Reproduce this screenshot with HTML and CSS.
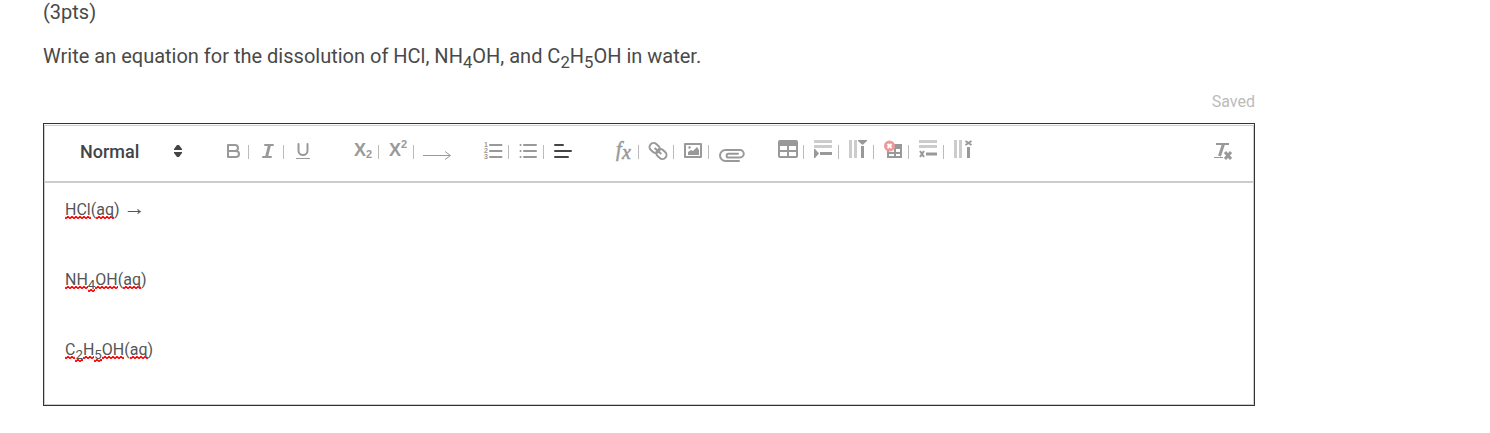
FILE: index.html
```
<!DOCTYPE html>
<html lang="en">
<head>
    <meta charset="UTF-8">
    <meta name="viewport" content="width=device-width, initial-scale=1.0">
    <title>Question</title>
    <link rel="stylesheet" href="styles.css">
</head>
<body>
    <main class="question">
        <p class="points">(3pts)</p>
        <p class="prompt">Write an equation for the dissolution of HCl, NH<sub>4</sub>OH, and C<sub>2</sub>H<sub>5</sub>OH in water.</p>
        <div class="status">Saved</div>

        <div class="editor">
            <div class="toolbar" role="toolbar" aria-label="Formatting">
                <div class="format">
                    <select aria-label="Text style">
                        <option>Normal</option>
                        <option>Heading</option>
                    </select>
                    <svg class="carets" viewBox="0 0 8 12"><path d="M0 5V4L3 0h2l3 4v1zM0 7h8v1l-3 4H3L0 8z"/></svg>
                </div>

                <div class="group">
                    <button type="button" aria-label="Bold"><svg viewBox="0 0 34 32"><path class="line" d="M14 10h7a3 3 0 0 1 0 6h-7zM14 16h8a3 3 0 0 1 0 6h-8z"/></svg></button>
                    <button type="button" aria-label="Italic"><svg viewBox="0 0 34 32"><path class="line" d="M16 10h8M14 22h8"/><path class="heavy" d="M20.500 10l-3 12"/></svg></button>
                    <button type="button" aria-label="Underline"><svg viewBox="0 0 34 32"><path class="line" d="M14.500 9v6.500a4.500 4.500 0 0 0 9 0V9"/><path class="thin" d="M12 23.500h14"/></svg></button>
                </div>

                <div class="group">
                    <button type="button" aria-label="Subscript"><svg viewBox="0 0 34 32"><text class="big" x="10" y="21">X</text><text class="small" x="22" y="23">2</text></svg></button>
                    <button type="button" aria-label="Superscript"><svg viewBox="0 0 34 32"><text class="big" x="10" y="21">X</text><text class="small" x="22" y="13">2</text></svg></button>
                    <button type="button" aria-label="Reaction arrow"><svg viewBox="0 0 34 32"><path class="thin" d="M9 20.500h27M31 16.500l5.500 4-5.500 4"/></svg></button>
                </div>

                <div class="group">
                    <button type="button" aria-label="Numbered list"><svg viewBox="0 0 34 32"><path class="line" d="M16 10h11.500M16 16h11.500M16 22h11.500"/><text class="tiny" x="10" y="12">1</text><text class="tiny" x="10" y="18">2</text><text class="tiny" x="10" y="24">3</text></svg></button>
                    <button type="button" aria-label="Bulleted list"><svg viewBox="0 0 34 32"><path class="line" d="M15 10h12M15 16h12M15 22h12M11.500 10h.1M11.500 16h.1M11.500 22h.1"/></svg></button>
                    <button type="button" aria-label="Align left"><svg viewBox="0 0 34 32"><path class="line dark" d="M11 10h8M11 16h16M11 22h13"/></svg></button>
                </div>

                <div class="group">
                    <button type="button" aria-label="Formula"><svg viewBox="0 0 34 32"><text class="math" x="12" y="21">f</text><text class="math" x="18" y="24">x</text></svg></button>
                    <button type="button" aria-label="Link"><svg viewBox="0 0 34 32"><g class="link" transform="rotate(42 19 16)"><rect x="9" y="12" width="11" height="8" rx="4"/><rect x="18" y="12" width="11" height="8" rx="4"/><path d="M14.500 16h9"/></g></svg></button>
                    <button type="button" aria-label="Image"><svg viewBox="0 0 34 32"><rect class="line" x="11" y="9" width="16" height="13"/><path d="M14 20v-3l3-2 2 1 4-4 2 3v5z"/><circle cx="15.500" cy="12.500" r="1.200"/></svg></button>
                    <button type="button" aria-label="Attachment"><svg viewBox="0 0 34 32"><path class="line" d="M30 26H16.500a5.500 5.500 0 0 1 0-11H31a3.500 3.500 0 0 1 0 7.500H19.500a1.800 1.800 0 0 1 0-3.700H29"/></svg></button>
                </div>

                <div class="group">
                    <button type="button" aria-label="Insert table"><svg viewBox="0 0 34 32"><path fill-rule="evenodd" d="M11 5h16a2 2 0 0 1 2 2v14a2 2 0 0 1-2 2H11a2 2 0 0 1-2-2V7a2 2 0 0 1 2-2zM11 11v4h7v-4zM20 11v4h7v-4zM11 17v4h7v-4zM20 17v4h7v-4z"/></svg></button>
                    <button type="button" aria-label="Insert row"><svg viewBox="0 0 34 32"><path class="pale" d="M10 6.500h18M10 11.500h18"/><path class="bar" d="M16 18.500h12"/><path d="M10 14h1l4 4.500-4 4.500h-1z"/></svg></button>
                    <button type="button" aria-label="Insert column"><svg viewBox="0 0 34 32"><path class="pale" d="M11.500 5v18M16.500 5v18"/><path class="bar" d="M23.500 11v12"/><path d="M19 5v1l4.500 4L28 6V5z"/></svg></button>
                    <button type="button" aria-label="Delete table"><svg viewBox="0 0 34 32"><path fill-rule="evenodd" d="M14 9h14v14H13V9zM15 14v3h5v-3zM22 14v3h4v-3zM15 19v2h5v-2zM22 19v2h4v-2z"/><circle class="remove" cx="15.500" cy="11" r="5.500"/><path class="cross" d="M13.500 9l4 4M17.500 9l-4 4"/></svg></button>
                    <button type="button" aria-label="Delete row"><svg viewBox="0 0 34 32"><path class="pale" d="M10 6.500h18M10 11.500h18"/><path class="bar" d="M17 19h11"/><path class="mark" d="M11 16l4 6M15 16l-4 6"/></svg></button>
                    <button type="button" aria-label="Delete column"><svg viewBox="0 0 34 32"><path class="pale" d="M11.500 5v18M16.500 5v18"/><path class="bar" d="M24.500 12v11"/><path class="mark" d="M21.500 6l6 4M27.500 6l-6 4"/></svg></button>
                </div>

                <div class="group last">
                    <button type="button" aria-label="Clear formatting"><svg viewBox="0 0 34 32"><path class="mark" d="M11 9h13"/><path class="heavy" d="M18.500 9l-4 12"/><path class="thin" d="M9 22.500h9"/><path class="heavy" d="M20 17l6 7M26 17l-6 7"/></svg></button>
                </div>
            </div>

            <div class="answer" contenteditable="true" spellcheck="false" role="textbox" aria-multiline="true" aria-label="Answer">
                <p><span class="typo">HCl</span>(<span class="typo">aq</span>) <span class="arrow">→</span></p>
                <p><span class="typo">NH</span><sub class="typo">4</sub><span class="typo">OH</span>(<span class="typo">aq</span>)</p>
                <p><span class="typo">C</span><sub class="typo">2</sub><span class="typo">H</span><sub class="typo">5</sub><span class="typo">OH</span>(<span class="typo">aq</span>)</p>
            </div>
        </div>
    </main>
</body>
</html>
```
FILE: styles.css
```
body {
    margin: 0;
    background-color: #fff;
    color: #494949;
    font-family: Roboto, sans-serif;
}
.question {
    max-width: 1212px;
    margin: 0 43px;
}
.points, .prompt {
    margin: 0;
    font-size: 20px;
    line-height: 24px;
}
.prompt {
    margin-top: 20px;
}
sub {
    line-height: 0;
}
.status {
    margin-top: 24px;
    color: #bbb;
    font-size: 16px;
    line-height: 20px;
    text-align: right;
}
.editor {
    margin-top: 11px;
    padding-top: 1px;
    border: 1px solid #333;
}
.toolbar {
    display: flex;
    flex-wrap: wrap;
    align-items: center;
    gap: 0 26px;
    padding: 9px 14px 14px 35px;
    border: 1px solid #ccc;
    border-bottom-width: 2px;
}
.format {
    display: flex;
    align-items: center;
    width: 108px;
}
.format select {
    flex: 1;
    appearance: none;
    margin: 0;
    padding: 0;
    border: none;
    background: none;
    color: #444;
    font-family: inherit;
    font-size: 18px;
    font-weight: 500;
    cursor: pointer;
}
.carets {
    width: 8px;
    height: 12px;
    margin-right: 6px;
    fill: #444;
    pointer-events: none;
}
.group {
    display: flex;
    align-items: center;
}
.last {
    margin-left: auto;
}
button {
    padding: 0;
    border: none;
    background: none;
    cursor: pointer;
}
button svg {
    display: block;
    width: 34px;
    height: 32px;
    overflow: visible;
    fill: #999;
}
button + button {
    display: flex;
    align-items: center;
}
button + button::before {
    content: "";
    width: 1px;
    height: 14px;
    margin-top: 2px;
    background-color: #bbb;
}

/* icon strokes */
.line, .thin, .pale, .bar, .mark, .cross, .heavy, .link {
    fill: none;
    stroke: #999;
    stroke-width: 2;
}
.line {
    stroke-linecap: round;
    stroke-linejoin: round;
}
.thin {
    stroke-width: 1;
}
.pale {
    stroke: #ccc;
    stroke-width: 3;
}
.bar, .heavy {
    stroke-width: 3;
}
.dark {
    stroke: #444;
}
.cross {
    stroke: #fff;
}
.remove {
    fill: #e99;
}
.big, .small, .tiny {
    font-family: "Liberation Sans", sans-serif;
    font-weight: bold;
}
.big {
    font-size: 18px;
}
.small {
    font-size: 11px;
}
.tiny {
    font-size: 7px;
}
.math {
    stroke: #999;
    font-family: "Liberation Serif", serif;
    font-size: 20px;
    font-style: italic;
    stroke-width: .5;
}

.answer {
    display: flex;
    flex-direction: column;
    gap: 48px;
    padding: 16px 20px 43px;
    border: 1px solid #ccc;
    border-top: none;
    outline: none;
    color: #555;
    font-size: 16px;
    line-height: 22px;
}
.answer p {
    margin: 0;
}
.typo {
    background: url("data:image/svg+xml,%3Csvg xmlns='http://www.w3.org/2000/svg' width='4' height='3'%3E%3Cpath d='M-1 0.5L1 2.5L3 0.5L5 2.5' fill='none' stroke='red' stroke-width='1.5'/%3E%3C/svg%3E") repeat-x left bottom;
}
.arrow {
    font-family: "Liberation Serif", serif;
    font-size: 22px;
    line-height: 0;
}
```
